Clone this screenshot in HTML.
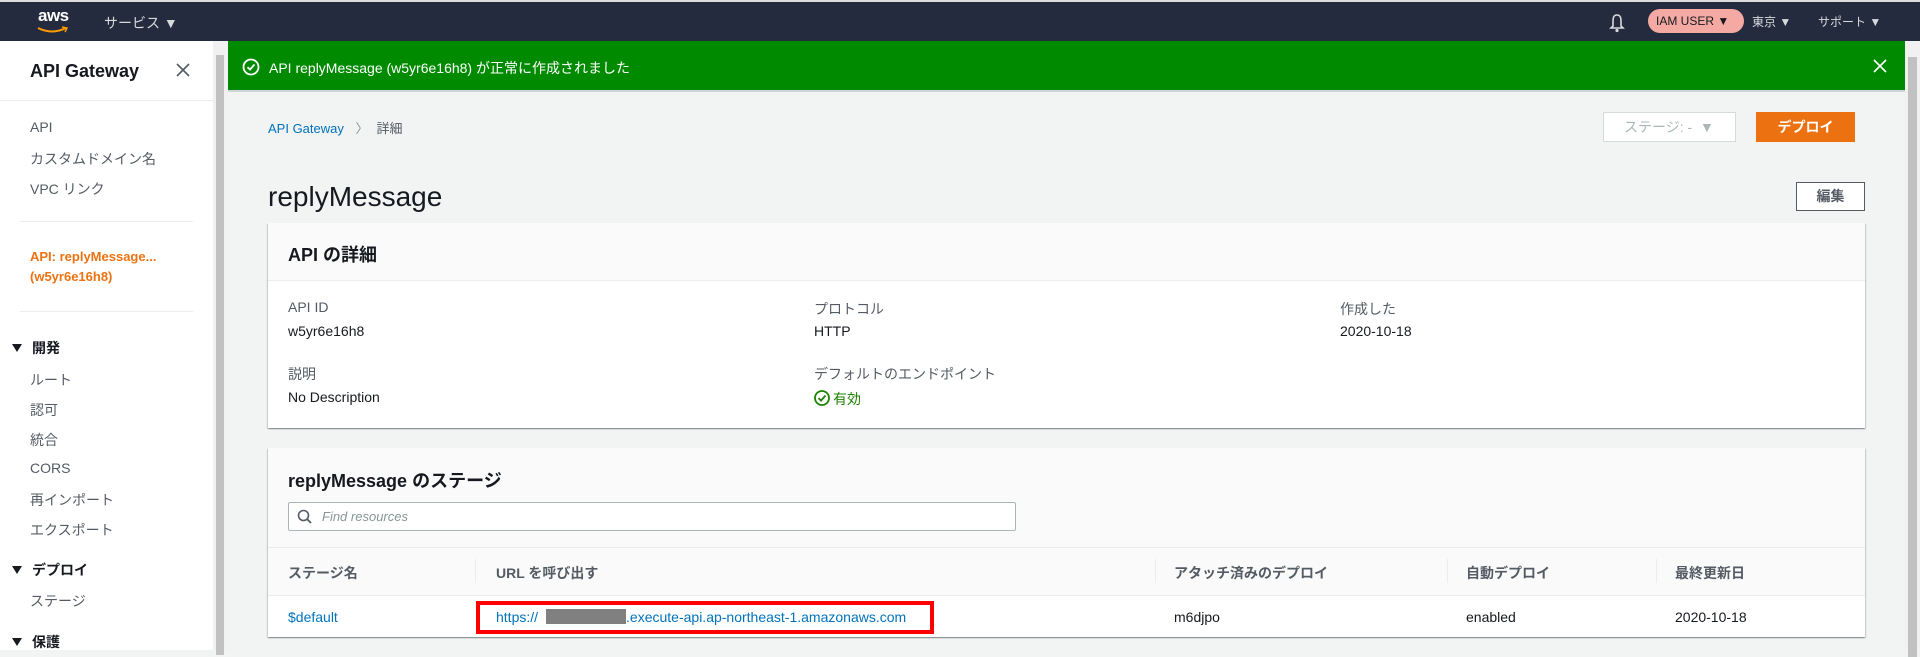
<!DOCTYPE html>
<html><head><meta charset="utf-8"><style>
*{margin:0;padding:0;box-sizing:border-box}
body{width:1920px;height:650px;overflow:hidden;background:#f2f3f3;font-family:"Liberation Sans","Noto Sans CJK JP",sans-serif;font-size:14px;color:#16191f;position:relative}
.a{position:absolute;white-space:nowrap}
.nav{left:0;top:0;width:1920px;height:41px;background:#252b3f;border-top:2px solid #ddd}
.nav .t{color:#d5dbdb;font-size:14px}
.side{left:0;top:41px;width:213px;height:609px;background:#fff}
.sb{left:213px;top:41px;width:15px;height:609px;background:#f1f1f1}
.sb i{position:absolute;left:3px;top:14px;width:8px;height:600px;background:#c1c1c1}
.rsb{left:1905px;top:41px;width:15px;height:609px;background:#f1f1f1}
.rsb i{position:absolute;left:3px;top:16px;width:9px;height:600px;background:#c1c1c1}
.hr{height:1px;background:#eaeded}
.card{background:#fff;box-shadow:0 1px 1px 0 rgba(0,28,36,.3),1px 1px 1px 0 rgba(0,28,36,.15),-1px 1px 1px 0 rgba(0,28,36,.15)}
.lbl{color:#545b64}
.lnk{color:#0073bb}
.th{color:#545b64;font-weight:bold}
.tri{display:inline-block;width:0;height:0;border-left:5px solid transparent;border-right:5px solid transparent;border-top:8px solid #16191f;margin-right:10px;vertical-align:1px}
</style></head><body>
<div class="a nav">
 <div class="a" style="left:38px;top:4px;color:#fff;font-size:17px;font-weight:bold;letter-spacing:-0.5px">aws</div>
 <svg class="a" style="left:36px;top:24px" width="34" height="8"><path d="M2 2 Q16 9 30 2" stroke="#f90" stroke-width="2" fill="none"/><path d="M26 1 L31 2 L29 6" stroke="#f90" stroke-width="1.5" fill="none"/></svg>
 <div class="a t" style="left:104px;top:11px">サービス ▼</div>
 <svg class="a" style="left:1608px;top:11px" width="18" height="20"><path d="M9 2 C5 2 5 6 5 9 L5 13 L3 15 L15 15 L13 13 L13 9 C13 6 13 2 9 2Z" fill="none" stroke="#d5dbdb" stroke-width="1.6"/><circle cx="9" cy="17.5" r="1.6" fill="#d5dbdb"/></svg>
 <div class="a" style="left:1648px;top:7px;width:96px;height:24px;border-radius:12px;background:#f4aaa2;color:#16191f;font-size:12px;line-height:24px;padding-left:8px">IAM USER ▼</div>
 <div class="a t" style="left:1752px;top:11px;font-size:12px">東京 ▼</div>
 <div class="a t" style="left:1818px;top:11px;font-size:12px">サポート ▼</div>
</div>
<div class="a side">
 <div class="a" style="left:30px;top:20px;font-size:18px;font-weight:bold">API Gateway</div>
 <svg class="a" style="left:175px;top:21px" width="16" height="16"><path d="M2 2 L14 14 M14 2 L2 14" stroke="#545b64" stroke-width="1.6"/></svg>
 <div class="a hr" style="left:0;top:59px;width:213px"></div>
 <div class="a lbl" style="left:30px;top:78px">API</div>
 <div class="a lbl" style="left:30px;top:108px">カスタムドメイン名</div>
 <div class="a lbl" style="left:30px;top:138px">VPC リンク</div>
 <div class="a hr" style="left:20px;top:180px;width:173px"></div>
 <div class="a" style="left:30px;top:208px;color:#ec7211;font-weight:bold;font-size:13px">API: replyMessage...</div>
 <div class="a" style="left:30px;top:228px;color:#ec7211;font-weight:bold;font-size:13px">(w5yr6e16h8)</div>
 <div class="a hr" style="left:20px;top:270px;width:173px"></div>
 <div class="a" style="left:12px;top:297px;font-weight:bold"><span class="tri"></span>開発</div>
 <div class="a lbl" style="left:30px;top:329px">ルート</div>
 <div class="a lbl" style="left:30px;top:359px">認可</div>
 <div class="a lbl" style="left:30px;top:389px">統合</div>
 <div class="a lbl" style="left:30px;top:419px">CORS</div>
 <div class="a lbl" style="left:30px;top:449px">再インポート</div>
 <div class="a lbl" style="left:30px;top:479px">エクスポート</div>
 <div class="a" style="left:12px;top:519px;font-weight:bold"><span class="tri"></span>デプロイ</div>
 <div class="a lbl" style="left:30px;top:550px">ステージ</div>
 <div class="a" style="left:12px;top:591px;font-weight:bold"><span class="tri"></span>保護</div>
</div>
<div class="a sb"><i></i></div>
<div class="a rsb"><i></i></div>
<div class="a" style="left:228px;top:41px;width:1677px;height:51px;background:#008a00;border-bottom:2px solid #cfd4d6"></div>
<svg class="a" style="left:242px;top:58px" width="18" height="18"><circle cx="9" cy="9" r="7.5" fill="none" stroke="#fff" stroke-width="1.8"/><path d="M5.5 9.2 L8 11.6 L12.5 6.5" fill="none" stroke="#fff" stroke-width="1.8"/></svg>
<div class="a" style="left:269px;top:58px;color:#fff">API replyMessage (w5yr6e16h8) が正常に作成されました</div>
<svg class="a" style="left:1873px;top:59px" width="14" height="14"><path d="M1 1 L13 13 M13 1 L1 13" stroke="#fff" stroke-width="1.6"/></svg>
<div class="a" style="left:268px;top:118px;font-size:13px"><span class="lnk">API Gateway</span> <span style="color:#879596;margin:0 8px">〉</span><span class="lbl">詳細</span></div>
<div class="a" style="left:1603px;top:112px;width:133px;height:30px;background:#fff;border:1px solid #d5dbdb;color:#aab7b8;line-height:28px;padding-left:20px">ステージ: - &nbsp;▼</div>
<div class="a" style="left:1756px;top:112px;width:99px;height:30px;background:#ec7211;color:#fff;font-weight:bold;line-height:30px;text-align:center">デプロイ</div>
<div class="a" style="left:268px;top:181px;font-size:28px">replyMessage</div>
<div class="a" style="left:1796px;top:182px;width:69px;height:29px;background:#fff;border:1px solid #545b64;color:#545b64;font-weight:bold;line-height:27px;text-align:center">編集</div>

<div class="a card" style="left:268px;top:223px;width:1597px;height:205px">
 <div class="a" style="left:0;top:0;width:1597px;height:58px;background:#fafafa;border-bottom:1px solid #eaeded"></div>
 <div class="a" style="left:20px;top:18px;font-size:18px;font-weight:bold">API の詳細</div>
 <div class="a lbl" style="left:20px;top:76px">API ID</div>
 <div class="a" style="left:20px;top:100px">w5yr6e16h8</div>
 <div class="a lbl" style="left:20px;top:141px">説明</div>
 <div class="a" style="left:20px;top:166px">No Description</div>
 <div class="a lbl" style="left:546px;top:76px">プロトコル</div>
 <div class="a" style="left:546px;top:100px">HTTP</div>
 <div class="a lbl" style="left:546px;top:141px">デフォルトのエンドポイント</div>
 <svg class="a" style="left:545px;top:166px" width="18" height="18"><circle cx="9" cy="9" r="7" fill="none" stroke="#1d8102" stroke-width="1.8"/><path d="M5.5 9.2 L8 11.6 L12.5 6.5" fill="none" stroke="#1d8102" stroke-width="1.8"/></svg>
 <div class="a" style="left:565px;top:166px;color:#1d8102">有効</div>
 <div class="a lbl" style="left:1072px;top:76px">作成した</div>
 <div class="a" style="left:1072px;top:100px">2020-10-18</div>
</div>

<div class="a card" style="left:268px;top:448px;width:1597px;height:189px">
 <div class="a" style="left:0;top:0;width:1597px;height:148px;background:#fafafa;border-bottom:1px solid #eaeded"></div>
 <div class="a" style="left:20px;top:19px;font-size:18px;font-weight:bold">replyMessage のステージ</div>
 <div class="a" style="left:20px;top:54px;width:728px;height:29px;background:#fff;border:1px solid #aab7b8;border-radius:2px"></div>
 <svg class="a" style="left:29px;top:61px" width="16" height="16"><circle cx="6.5" cy="6.5" r="5" fill="none" stroke="#545b64" stroke-width="1.6"/><path d="M10 10 L14 14" stroke="#545b64" stroke-width="1.8"/></svg>
 <div class="a" style="left:54px;top:61px;color:#879596;font-style:italic;font-size:13px">Find resources</div>
 <div class="a" style="left:0;top:99px;width:1597px;height:1px;background:#eaeded"></div>
 <div class="a" style="left:207px;top:111px;width:1px;height:24px;background:#eaeded"></div>
 <div class="a" style="left:887px;top:111px;width:1px;height:24px;background:#eaeded"></div>
 <div class="a" style="left:1179px;top:111px;width:1px;height:24px;background:#eaeded"></div>
 <div class="a" style="left:1388px;top:111px;width:1px;height:24px;background:#eaeded"></div>
 <div class="a th" style="left:20px;top:115px">ステージ名</div>
 <div class="a th" style="left:228px;top:115px">URL を呼び出す</div>
 <div class="a th" style="left:906px;top:115px">アタッチ済みのデプロイ</div>
 <div class="a th" style="left:1198px;top:115px">自動デプロイ</div>
 <div class="a th" style="left:1407px;top:115px">最終更新日</div>
 <div class="a lnk" style="left:20px;top:161px">$default</div>
 <div class="a" style="left:208px;top:153px;width:458px;height:33px;border:4px solid #f00"></div>
 <div class="a lnk" style="left:228px;top:161px">https://<span style="display:inline-block;width:80px;height:15px;background:#808080;vertical-align:-2px;margin-left:8px"></span>.execute-api.ap-northeast-1.amazonaws.com</div>
 <div class="a" style="left:906px;top:161px">m6djpo</div>
 <div class="a" style="left:1198px;top:161px">enabled</div>
 <div class="a" style="left:1407px;top:161px">2020-10-18</div>
</div>
</body></html>
